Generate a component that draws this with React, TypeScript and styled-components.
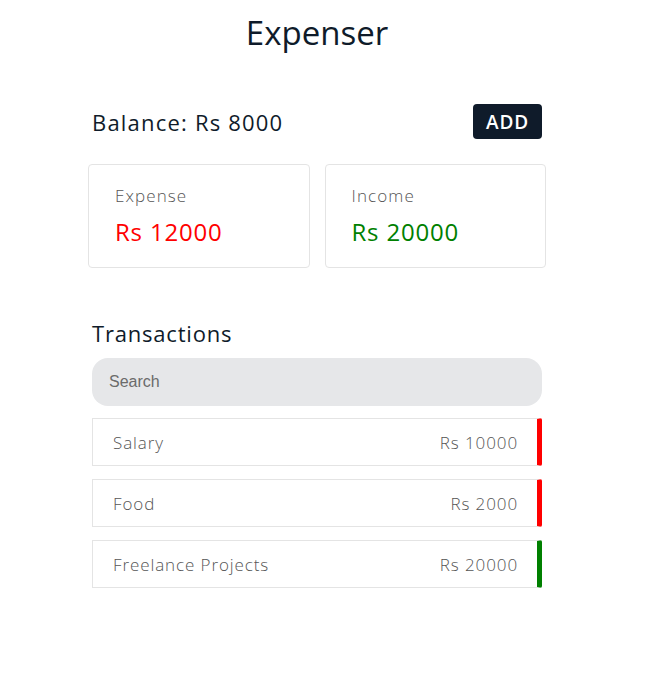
import styled, { createGlobalStyle } from "styled-components";

const GlobalStyle = createGlobalStyle`
  body {
    margin: 0;
    background: #ffffff;
    font-family: "Open Sans", "DejaVu Sans", sans-serif;
    color: #0f1b2a;
  }
  * {
    box-sizing: border-box;
  }
`;

const Page = styled.div`
  width: 634px;
  display: flex;
  flex-direction: column;
  align-items: center;
`;

const Title = styled.h1`
  margin: 12px 0 0;
  font-size: 33px;
  font-weight: 400;
  line-height: 42px;
  color: #0f1b2a;
`;

const Main = styled.div`
  width: 450px;
  display: flex;
  flex-direction: column;
  margin-top: 50px;
`;

const BalanceRow = styled.div`
  display: flex;
  align-items: center;
  justify-content: space-between;
  height: 35px;
`;

const Balance = styled.div`
  font-size: 22px;
  font-weight: 400;
  letter-spacing: 1.2px;
  color: #0f1b2a;
`;

const AddButton = styled.button`
  width: 69px;
  height: 35px;
  border: none;
  border-radius: 4px;
  background: #0f1b2a;
  color: #ffffff;
  font-family: "Open Sans", sans-serif;
  font-size: 19px;
  font-weight: 600;
  letter-spacing: 0.8px;
  cursor: pointer;
`;

const Cards = styled.div`
  display: grid;
  grid-template-columns: 1fr 1fr;
  gap: 15px;
  margin: 25px -4px 0;
`;

const Card = styled.div`
  height: 104px;
  border: 1px solid #e4e4e4;
  border-radius: 4px;
  padding: 19px 26px;
  display: flex;
  flex-direction: column;
  gap: 8px;
`;

const CardLabel = styled.span`
  font-size: 17px;
  font-weight: 300;
  letter-spacing: 1.1px;
  color: #555555;
`;

const CardValue = styled.span<{ $tone: string }>`
  font-size: 24px;
  font-weight: 400;
  letter-spacing: 0.8px;
  color: ${(p) => p.$tone};
`;

const Heading = styled.h2`
  margin: 50px 0 0;
  font-size: 22px;
  font-weight: 400;
  line-height: 30px;
  letter-spacing: 0.8px;
  color: #0f1b2a;
`;

const Search = styled.input`
  margin-top: 10px;
  height: 48px;
  width: 100%;
  border: none;
  border-radius: 16px;
  background: #e6e7e9;
  padding: 0 17px;
  font-family: "Liberation Sans", Arial, sans-serif;
  font-size: 16px;
  color: #333;
  outline: none;
  &::placeholder {
    color: #6b6b6b;
  }
`;

const List = styled.div`
  display: flex;
  flex-direction: column;
  gap: 13px;
  margin-top: 12px;
`;

const Row = styled.div<{ $tone: string }>`
  height: 48px;
  display: flex;
  align-items: center;
  justify-content: space-between;
  border: 1px solid #e4e4e4;
  border-right: 5px solid ${(p) => p.$tone};
  border-radius: 0 2px 2px 0;
  padding: 0 19px 0 20px;
  font-size: 17px;
  font-weight: 300;
  letter-spacing: 0.9px;
  color: #555555;
`;

const expense = "#ff0000";
const income = "#008000";

const transactions = [
  { label: "Salary", amount: 10000, tone: expense },
  { label: "Food", amount: 2000, tone: expense },
  { label: "Freelance Projects", amount: 20000, tone: income },
];

export default function App() {
  return (
    <>
      <GlobalStyle />
      <Page>
        <Title>Expenser</Title>
        <Main>
          <BalanceRow>
            <Balance>Balance: Rs 8000</Balance>
            <AddButton>ADD</AddButton>
          </BalanceRow>
          <Cards>
            <Card>
              <CardLabel>Expense</CardLabel>
              <CardValue $tone={expense}>Rs 12000</CardValue>
            </Card>
            <Card>
              <CardLabel>Income</CardLabel>
              <CardValue $tone={income}>Rs 20000</CardValue>
            </Card>
          </Cards>
          <Heading>Transactions</Heading>
          <Search placeholder="Search" />
          <List>
            {transactions.map((t) => (
              <Row key={t.label} $tone={t.tone}>
                <span>{t.label}</span>
                <span>Rs {t.amount}</span>
              </Row>
            ))}
          </List>
        </Main>
      </Page>
    </>
  );
}
